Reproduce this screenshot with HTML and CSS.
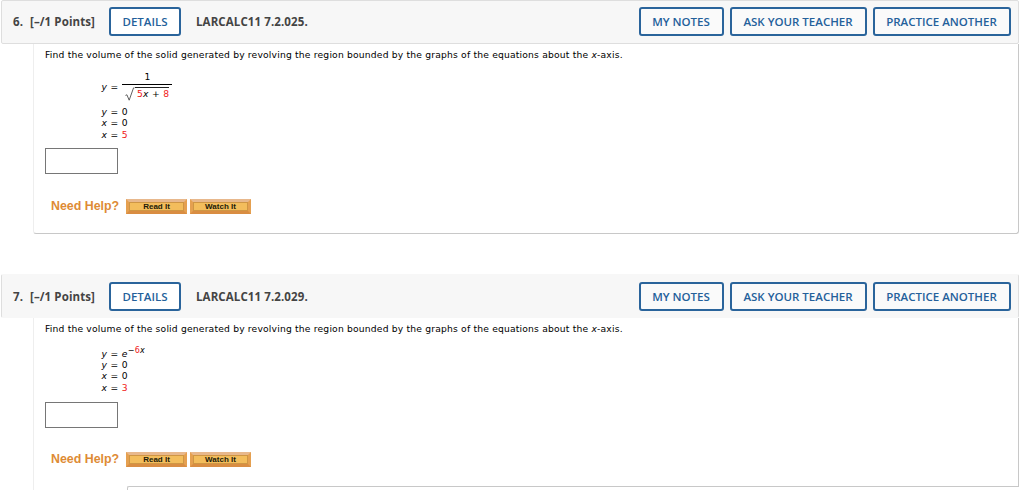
FILE: index.html
```html
<!DOCTYPE html>
<html lang="en">
<head>
  <meta charset="UTF-8" />
  <meta name="viewport" content="width=device-width, initial-scale=1.0" />
  <title>Volume of Solids</title>
  <link rel="stylesheet" href="styles.css">
</head>
<body>

  <!-- Question 6 -->
  <section class="question first">
    <div class="question-header">
      <span class="number">6.</span>
      <span class="points">[–/1 Points]</span>
      <button class="btn details">DETAILS</button>
      <span class="code">LARCALC11 7.2.025.</span>
      <div class="actions">
        <button class="btn notes">MY NOTES</button>
        <button class="btn ask">ASK YOUR TEACHER</button>
        <button class="btn practice">PRACTICE ANOTHER</button>
      </div>
    </div>
    <div class="question-body">
      <p class="prompt">Find the volume of the solid generated by revolving the region bounded by the graphs of the equations about the <i>x</i>-axis.</p>
      <div class="equations">
        <div class="equation fraction-row">
          <span><i>y</i> =</span>
          <span class="fraction">
            <span class="numerator">1</span>
            <span class="denominator">
              <svg class="radical" width="10" height="15" viewBox="0 0 10 15"><path d="M0.5 8.5L2 7.8L4.4 13.5L9 0.5H10" fill="none" stroke="#444" stroke-width="0.9" /></svg>
              <span class="radicand"><b>5</b><i>x</i> + <b>8</b></span>
            </span>
          </span>
        </div>
        <div class="equation"><i>y</i> = 0</div>
        <div class="equation"><i>x</i> = 0</div>
        <div class="equation"><i>x</i> = <b>5</b></div>
      </div>
      <input class="answer" type="text" />
      <div class="help">
        <span class="help-label">Need Help?</span>
        <button class="help-btn">Read It</button>
        <button class="help-btn">Watch It</button>
      </div>
    </div>
  </section>

  <!-- Question 7 -->
  <section class="question second">
    <div class="question-header">
      <span class="number">7.</span>
      <span class="points">[–/1 Points]</span>
      <button class="btn details">DETAILS</button>
      <span class="code">LARCALC11 7.2.029.</span>
      <div class="actions">
        <button class="btn notes">MY NOTES</button>
        <button class="btn ask">ASK YOUR TEACHER</button>
        <button class="btn practice">PRACTICE ANOTHER</button>
      </div>
    </div>
    <div class="question-body">
      <p class="prompt">Find the volume of the solid generated by revolving the region bounded by the graphs of the equations about the <i>x</i>-axis.</p>
      <div class="equations">
        <div class="equation"><i>y</i> = <i>e</i><sup>−<b>6</b><i>x</i></sup></div>
        <div class="equation"><i>y</i> = 0</div>
        <div class="equation"><i>x</i> = 0</div>
        <div class="equation"><i>x</i> = <b>3</b></div>
      </div>
      <input class="answer" type="text" />
      <div class="help">
        <span class="help-label">Need Help?</span>
        <button class="help-btn">Read It</button>
        <button class="help-btn">Watch It</button>
      </div>
      <div class="next-panel"></div>
    </div>
  </section>

</body>
</html>
```

FILE: styles.css
```css
* {
  box-sizing: border-box;
  margin: 0;
  padding: 0;
}

body {
  width: 1024px;
  height: 490px;
  overflow: hidden;
  background: #fff;
  color: #000;
  font-family: Verdana, "DejaVu Sans", sans-serif;
  font-size: 9.2px;
  letter-spacing: 0.18px;
}

.question {
  width: 1018px;
  margin-left: 1px;
}

.second {
  margin-top: 40px;
}

.question-header {
  display: flex;
  align-items: center;
  height: 44px;
  padding: 0 7px 0 11px;
  background: #f7f7f7;
  border: 1px solid #dedede;
  border-radius: 2px;
  color: #444;
  font-family: "Open Sans", sans-serif;
  font-size: 11.5px;
  font-weight: 700;
  letter-spacing: 0.1px;
  white-space: nowrap;
}

.first .question-header {
  padding-bottom: 1px;
}

.second .question-header {
  padding-top: 1px;
  border-top-color: #f7f7f7;
  border-bottom-color: #f7f7f7;
}

.number {
  width: 17px;
}

.points {
  width: 79px;
}

.btn {
  height: 29px;
  background: #fff;
  border: 2px solid #2a649b;
  border-radius: 3px;
  color: #24609a;
  font-family: "Open Sans", sans-serif;
  font-size: 11.5px;
  font-weight: 600;
  text-align: center;
  white-space: nowrap;
}

.actions .btn {
  padding-right: 1px;
  background: #fafafa;
}

.details {
  width: 72px;
}

.code {
  margin-left: 15px;
}

.actions {
  display: flex;
  gap: 6px;
  margin-left: auto;
}

.notes {
  width: 85px;
}

.ask {
  width: 137px;
}

.practice {
  width: 138px;
}

.question-body {
  height: 190px;
  margin-left: 32px;
  padding: 5px 0 0 11px;
  border: 1px solid #c8c8c8;
  border-top: none;
  border-left-color: #eee;
  border-radius: 0 0 3px 3px;
}

.prompt {
  line-height: 12px;
  white-space: nowrap;
}

.equations {
  margin: 10px 0 0 56.5px;
}

.equation {
  height: 11.3px;
  line-height: 11.3px;
  letter-spacing: 0.3px;
  white-space: nowrap;
}

.equation b {
  color: #f02020;
  font-weight: 400;
}

.fraction-row {
  display: flex;
  align-items: flex-start;
  gap: 4px;
  height: 35px;
}

.fraction-row > span:first-child {
  margin-top: 10px;
}

.fraction {
  width: 50px;
}

.numerator {
  display: block;
  height: 14px;
  line-height: 11px;
  border-bottom: 1px solid #000;
  text-align: center;
}

.denominator {
  display: flex;
  padding: 2px 3px 0;
}

.radical {
  display: block;
}

.radicand {
  flex: 1;
  height: 13px;
  line-height: 12px;
  border-top: 1px solid #222;
  padding-left: 2px;
}

.equation sup {
  font-size: 8px;
  line-height: 0;
  vertical-align: 4px;
}

.answer {
  display: block;
  width: 73px;
  height: 26px;
  margin-top: 8px;
  border: 1px solid #767676;
}

.help {
  display: flex;
  align-items: center;
  gap: 3px;
  height: 15px;
  margin: 25px 0 0 6px;
  letter-spacing: 0;
}

.help-label {
  width: 72px;
  color: #de8b35;
  font-family: "Liberation Sans", Arial, sans-serif;
  font-size: 12.4px;
  font-weight: 700;
}

.help-btn {
  width: 61px;
  height: 15px;
  background: #f3bd5c;
  border: 3px solid #e5a050;
  border-top-color: #e8b88c;
  border-bottom-color: #d98d42;
  outline: 1px solid #cf9644;
  outline-offset: -4px;
  color: #221a08;
  font-family: "Liberation Sans", Arial, sans-serif;
  font-size: 8px;
  font-weight: 700;
  line-height: 10px;
}

.second .question-body {
  height: 180px;
}

.second .equations {
  margin-top: 12.7px;
}

.second .answer {
  margin-top: 9.1px;
}

.second .help {
  margin-top: 24px;
}

/* top edge of the help panel that follows */
.next-panel {
  height: 10px;
  margin: 19px -1px 0 82px;
  background: #fff;
  border: 1px solid #c8c8c8;
  border-right: none;
  border-radius: 2px 0 0 0;
}
```
